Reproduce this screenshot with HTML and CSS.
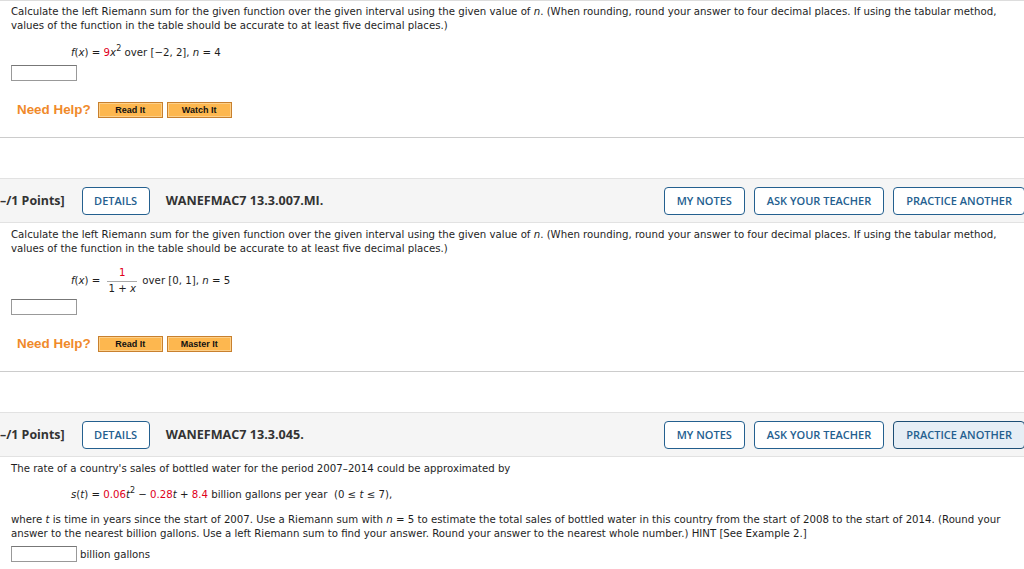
FILE: index.html
```html
<!DOCTYPE html>
<html lang="en">
<head>
  <meta charset="UTF-8" />
  <title>Riemann sums</title>
  <link rel="stylesheet" href="styles.css">
</head>
<body>

  <section class="question first">
    <div class="q-body">
      <p class="text">Calculate the left Riemann sum for the given function over the given interval using the given value of <i>n</i>. (When rounding, round your answer to four decimal places. If using the tabular method,<br>values of the function in the table should be accurate to at least five decimal places.)</p>
      <div class="formula"><span><i>f</i>(<i>x</i>) = <span class="red">9</span><i>x</i><sup>2</sup> over [−2, 2], <i>n</i> = 4</span></div>
      <input class="answer" type="text">
      <div class="help">
        <span class="need">Need Help?</span>
        <button class="help-btn">Read It</button>
        <button class="help-btn">Watch It</button>
      </div>
    </div>
  </section>

  <hr class="divider">

  <section class="question">
    <div class="q-header">
      <span class="points">–/1 Points]</span>
      <button class="outline details">DETAILS</button>
      <span class="q-title">WANEFMAC7 13.3.007.MI.</span>
      <div class="tools">
        <button class="outline">MY NOTES</button>
        <button class="outline">ASK YOUR TEACHER</button>
        <button class="outline">PRACTICE ANOTHER</button>
      </div>
    </div>
    <div class="q-body">
      <p class="text lead">Calculate the left Riemann sum for the given function over the given interval using the given value of <i>n</i>. (When rounding, round your answer to four decimal places. If using the tabular method,<br>values of the function in the table should be accurate to at least five decimal places.)</p>
      <div class="formula frac-row">
        <span><i>f</i>(<i>x</i>) = </span>
        <span class="frac">
          <span class="num red">1</span>
          <span class="den">1 + <i>x</i></span>
        </span>
        <span>over [0, 1], <i>n</i> = 5</span>
      </div>
      <input class="answer tight" type="text">
      <div class="help">
        <span class="need">Need Help?</span>
        <button class="help-btn">Read It</button>
        <button class="help-btn">Master It</button>
      </div>
    </div>
  </section>

  <hr class="divider">

  <section class="question">
    <div class="q-header">
      <span class="points">–/1 Points]</span>
      <button class="outline details">DETAILS</button>
      <span class="q-title">WANEFMAC7 13.3.045.</span>
      <div class="tools">
        <button class="outline">MY NOTES</button>
        <button class="outline">ASK YOUR TEACHER</button>
        <button class="outline active">PRACTICE ANOTHER</button>
      </div>
    </div>
    <div class="q-body">
      <p class="text lead">The rate of a country's sales of bottled water for the period 2007–2014 could be approximated by</p>
      <div class="formula mid"><span><i>s</i>(<i>t</i>) = <span class="red">0.06</span><i>t</i><sup>2</sup> − <span class="red">0.28</span><i>t</i> + <span class="red">8.4</span> billion gallons per year&nbsp; (0 ≤ <i>t</i> ≤ 7),</span></div>
      <p class="text after">where <i>t</i> is time in years since the start of 2007. Use a Riemann sum with <i>n</i> = 5 to estimate the total sales of bottled water in this country from the start of 2008 to the start of 2014. (Round your<br>answer to the nearest billion gallons. Use a left Riemann sum to find your answer. Round your answer to the nearest whole number.) HINT [See Example 2.]</p>
      <div class="answer-row">
        <input class="answer" type="text">
        <span>billion gallons</span>
      </div>
    </div>
  </section>

</body>
</html>
```

FILE: styles.css
```css
body {
  margin: 0;
  background: white;
  font-family: "DejaVu Sans", Verdana, sans-serif;
  font-size: 10.2px;
  color: #1e1e1e;
  overflow: hidden;
}

.question.first {
  border-top: 1px solid #ddd;
}

.q-body {
  padding: 0 4px 0 11px;
}

.text {
  margin: 4px 0 0;
  line-height: 14px;
  white-space: nowrap;
}

.text.lead {
  margin-top: 5px;
}

.formula {
  margin-top: 13px;
  padding-left: 60px;
  line-height: 14px;
}

sup {
  font-size: 8px;
  line-height: 0;
  vertical-align: 5px;
}

.red {
  color: #e0001b;
}

.answer {
  display: block;
  box-sizing: border-box;
  width: 66px;
  height: 16px;
  margin: 5px 0 0;
  border: 1px solid #999;
  border-top-color: #777;
  padding: 0;
}

.help {
  display: flex;
  align-items: center;
  height: 17px;
  margin-top: 20px;
  padding-left: 6px;
}

.need {
  font-family: "Liberation Sans", Arial, sans-serif;
  font-weight: bold;
  font-size: 13.4px;
  color: #f08a2a;
  margin-right: 7px;
}

.help-btn {
  box-sizing: border-box;
  width: 65px;
  height: 16px;
  margin-right: 4px;
  padding: 0;
  font-family: "Liberation Sans", Arial, sans-serif;
  font-weight: bold;
  font-size: 9px;
  color: #111;
  background: #fdb74f;
  border: 1px solid #c8802e;
  box-shadow: inset 0 0 0 1px #fdd08a;
}

.divider {
  margin: 19px 0 0;
  border: none;
  border-top: 1px solid #ccc;
}

.q-header {
  display: flex;
  align-items: center;
  height: 43px;
  margin-top: 40px;
  background: #f5f5f5;
  border-top: 1px solid #e2e2e2;
  border-bottom: 1px solid #e2e2e2;
  font-family: "Open Sans", sans-serif;
}

.points {
  font-weight: bold;
  font-size: 12.4px;
  color: #333;
  margin-right: 17px;
}

.outline {
  box-sizing: border-box;
  height: 28px;
  padding: 0 12px;
  background: white;
  border: 1.5px solid #24608f;
  border-radius: 4px;
  font-family: "Open Sans", sans-serif;
  font-weight: 600;
  font-size: 11px;
  color: #24608f;
  white-space: nowrap;
}

.details {
  width: 68px;
  padding: 0;
}

.q-title {
  margin-left: 16px;
  font-weight: bold;
  font-size: 12.6px;
  color: #333;
}

.tools {
  display: flex;
  gap: 9px;
  margin-left: auto;
  margin-right: -1px;
}

.tools .outline:first-child {
  width: 81px;
  padding: 0;
}

.outline.active {
  background: #e6eef5;
  border-color: #1c4d74;
}

.frac-row {
  display: flex;
  align-items: center;
  margin-top: 10px;
}

.frac {
  display: inline-flex;
  flex-direction: column;
  align-items: center;
  margin: 0 5px 0 7px;
}

.num {
  width: 30px;
  text-align: center;
  border-bottom: 1px solid #aaa;
  line-height: 14px;
  padding-bottom: 1px;
}

.den {
  line-height: 14px;
}

.answer.tight {
  margin-top: 3px;
}

.formula.mid {
  margin-top: 12px;
}

.text.after {
  margin-top: 11px;
}

.answer-row {
  display: flex;
  align-items: center;
  gap: 3px;
  margin-top: 5px;
}

.answer-row .answer {
  margin: 0;
}
```
